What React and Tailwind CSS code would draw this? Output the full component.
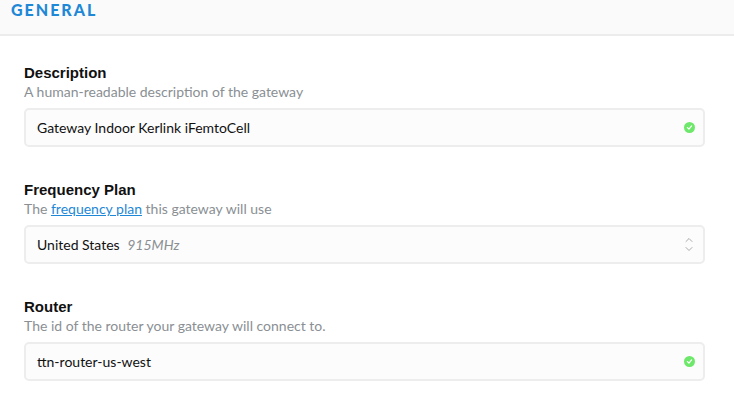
import { ChevronUp, ChevronDown } from "lucide-react";

function Check() {
  return (
    <span className="flex h-[11px] w-[11px] items-center justify-center rounded-full bg-[#6ee86a]">
      <svg viewBox="0 0 10 10" className="h-[7px] w-[7px]">
        <path d="M2 5.2 L4.2 7.2 L8 2.8" fill="none" stroke="#fff" strokeWidth="1.8" strokeLinecap="round" strokeLinejoin="round" />
      </svg>
    </span>
  );
}

function Field({ label, children, value, select, last }) {
  return (
    <div className={last ? "" : "mb-[34px]"}>
      <div className="font-['Liberation_Sans',Arial,sans-serif] text-[15px] font-bold leading-[18px] text-[#111]">{label}</div>
      <div className="pt-[1px] font-['Lato',sans-serif] text-[14px] leading-[18px] text-[#8a8f94]">{children}</div>
      <div className="mt-[7px] flex h-[39px] items-center justify-between rounded-[5px] border-2 border-[#ededed] bg-[#fcfcfc] pl-[11px] pr-[8px] font-['Lato',sans-serif] text-[14px] text-[#111]">
        <div>{value}</div>
        {select ? (
          <div className="flex flex-col items-center text-[#aaaaaa]">
            <ChevronUp size={12} strokeWidth={2} className="-mb-[3px]" />
            <ChevronDown size={12} strokeWidth={2} />
          </div>
        ) : (
          <Check />
        )}
      </div>
    </div>
  );
}

export default function App() {
  return (
    <div className="h-[401px] w-[734px] overflow-hidden bg-white">
      <div className="h-[36px] border-b-2 border-[#ececec] bg-[#fafafa] pl-[11px] pt-[1px] font-['Lato',sans-serif] text-[16px] font-black leading-[18px] tracking-[2px] text-[#1e88d6]">
        GENERAL
      </div>
      <div className="w-[705px] pl-[24px] pt-[28px]">
        <Field label="Description" value="Gateway Indoor Kerlink iFemtoCell">
          A human-readable description of the gateway
        </Field>
        <Field
          label="Frequency Plan"
          select
          value={
            <span>
              United States <span className="ml-[4px] italic text-[#8a8f94]">915MHz</span>
            </span>
          }
        >
          The{" "}
          <a href="#" className="text-[#1e88d6] underline">
            frequency plan
          </a>{" "}
          this gateway will use
        </Field>
        <Field label="Router" value="ttn-router-us-west" last>
          The id of the router your gateway will connect to.
        </Field>
      </div>
    </div>
  );
}
